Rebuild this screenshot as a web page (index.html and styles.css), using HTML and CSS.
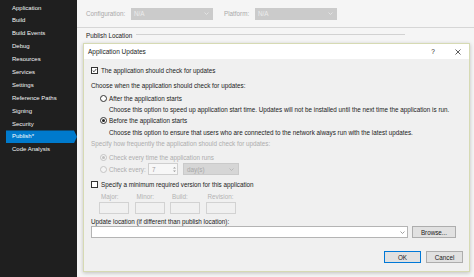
FILE: index.html
```html
<!DOCTYPE html>
<html>
<head>
<meta charset="utf-8">
<link rel="stylesheet" href="styles.css">
</head>
<body>
<div class="app">
  <nav class="sidebar">
    <div class="nav-item">Application</div>
    <div class="nav-item">Build</div>
    <div class="nav-item">Build Events</div>
    <div class="nav-item">Debug</div>
    <div class="nav-item">Resources</div>
    <div class="nav-item">Services</div>
    <div class="nav-item">Settings</div>
    <div class="nav-item">Reference Paths</div>
    <div class="nav-item">Signing</div>
    <div class="nav-item">Security</div>
    <div class="nav-item active">Publish*</div>
    <div class="nav-item">Code Analysis</div>
  </nav>
  <main class="main">
    <div class="toolbar">
      <span class="tb-label cfg">Configuration:</span>
      <div class="combo top"><span>N/A</span><svg class="chev" width="5" height="3" viewBox="0 0 5 3"><polyline points="0.5,0.5 2.5,2.5 4.5,0.5" fill="none" stroke="#e8e8e8" stroke-width="0.8"/></svg></div>
      <span class="tb-label plat">Platform:</span>
      <div class="combo top"><span>N/A</span><svg class="chev" width="5" height="3" viewBox="0 0 5 3"><polyline points="0.5,0.5 2.5,2.5 4.5,0.5" fill="none" stroke="#e8e8e8" stroke-width="0.8"/></svg></div>
    </div>
    <div class="section-head"><span>Publish Location</span><div class="rule"></div></div>
    <div class="dialog">
      <div class="titlebar">
        <span class="title">Application Updates</span>
        <span class="help">?</span>
        <span class="close"><svg width="6" height="6" viewBox="0 0 6 6"><path d="M0.5 0.5L5.5 5.5M5.5 0.5L0.5 5.5" stroke="#333" stroke-width="0.8"/></svg></span>
      </div>
      <div class="dlg-body">
        <div class="row r-check">
          <span class="cb checked"><svg width="5" height="5" viewBox="0 0 5 5"><polyline points="0.7,2.6 2,3.8 4.3,1" fill="none" stroke="#222" stroke-width="0.8"/></svg></span>
          <span class="lbl">The application should check for updates</span>
        </div>
        <div class="row r-choose">Choose when the application should check for updates:</div>
        <div class="row opt r-after"><span class="radio"></span><span class="lbl">After the application starts</span></div>
        <div class="row desc r-desc1">Choose this option to speed up application start time. Updates will not be installed until the next time the application is run.</div>
        <div class="row opt r-before"><span class="radio on"></span><span class="lbl">Before the application starts</span></div>
        <div class="row desc r-desc2">Choose this option to ensure that users who are connected to the network always run with the latest updates.</div>
        <div class="row dis r-freq">Specify how frequently the application should check for updates:</div>
        <div class="row opt dis r-every"><span class="radio on dis"></span><span class="lbl">Check every time the application runs</span></div>
        <div class="row opt dis r-interval">
          <span class="radio dis"></span><span class="lbl every-lbl">Check every:</span>
          <div class="spin"><span>7</span><svg width="3" height="7" viewBox="0 0 3 7"><path d="M0 2.5L1.5 1L3 2.5Z M0 4.5L1.5 6L3 4.5Z" fill="#9a9a9a"/></svg></div>
          <div class="combo days"><span>day(s)</span><svg width="5" height="3" viewBox="0 0 5 3"><polyline points="0.5,0.5 2.5,2.5 4.5,0.5" fill="none" stroke="#b0b0b0" stroke-width="0.8"/></svg></div>
        </div>
        <div class="row r-minver">
          <span class="cb"></span>
          <span class="lbl">Specify a minimum required version for this application</span>
        </div>
        <div class="versions">
          <div class="vcol"><span class="vlbl">Major:</span><div class="vbox"></div></div>
          <div class="vcol"><span class="vlbl">Minor:</span><div class="vbox"></div></div>
          <div class="vcol"><span class="vlbl">Build:</span><div class="vbox"></div></div>
          <div class="vcol"><span class="vlbl">Revision:</span><div class="vbox"></div></div>
        </div>
        <div class="r-uplbl">Update location (if different than publish location):</div>
        <div class="r-input">
          <div class="input"><svg width="5" height="3" viewBox="0 0 5 3"><polyline points="0.5,0.5 2.5,2.5 4.5,0.5" fill="none" stroke="#888" stroke-width="0.8"/></svg></div>
          <div class="btn browse">Browse...</div>
        </div>
        <div class="r-buttons">
          <div class="btn ok">OK</div>
          <div class="btn cancel">Cancel</div>
        </div>
      </div>
    </div>
  </main>
</div>
</body>
</html>
```
FILE: styles.css
```css
* { box-sizing: border-box; }
body {
  margin: 0;
  font-family: "Liberation Sans", Arial, sans-serif;
  font-size: 6.3px;
  color: #1a1a1a;
  background: #f5f5f5;
}
.app { display: flex; width: 474px; height: 277px; overflow: hidden; }
.sidebar { width: 77px; flex: none; background: #1f1f1f; padding-top: 1.5px; font-size: 6px; }
.nav-item {
  height: 12.9px; line-height: 12.9px; padding-left: 12px;
  color: #f4f4f4; white-space: nowrap;
}
.nav-item.active {
  margin-left: 6px; padding-left: 6px; background: #007acc; color: #fff;
  clip-path: polygon(0 0, calc(100% - 3px) 0, 100% 50%, calc(100% - 3px) 100%, 0 100%);
}
.main { flex: 1; display: flex; flex-direction: column; background: #f5f5f5; }
.toolbar {
  height: 28px; border-bottom: 1px solid #d6d6d6;
  display: flex; align-items: center; padding-left: 9px;
}
.tb-label { color: #a9a9a9; }
.tb-label.cfg { width: 45px; }
.tb-label.plat { width: 31px; margin-left: 11px; }
.combo {
  display: flex; align-items: center; justify-content: space-between;
  height: 12px; padding: 0 4px 0 3px;
}
.combo.top { width: 82px; background: #cbcbcb; color: #ececec; }
.section-head { height: 15px; display: flex; align-items: center; padding-left: 9px; }
.section-head .rule { margin-left: 4px; flex: none; width: 269px; height: 1px; background: #d2d2d2; margin-top: -2px; }
.dialog {
  margin-left: 6px; width: 387px; border: 1px solid #d6dab3;
  background: #f0f0f0; box-shadow: 0 1px 4px rgba(0,0,0,0.22);
}
.titlebar { height: 15px; background: #fff; display: flex; align-items: center; padding: 0 6px 0 4px; }
.title { flex: 1; font-size: 6.5px; }
.help { width: 10px; text-align: center; margin-right: 15px; font-size: 6.5px; }
.close { width: 10px; display: flex; justify-content: center; }
.dlg-body { padding: 6px 6px 8px 7px; }
.row { display: flex; align-items: center; height: 10px; white-space: nowrap; }
.cb { width: 7px; height: 7px; border: 1px solid #333; background: #fff; display: flex; align-items: center; justify-content: center; flex: none; }
.row .lbl { margin-left: 3px; }
.opt { padding-left: 9px; }
.opt .lbl { margin-left: 2px; }
.radio { width: 7px; height: 7px; border: 1px solid #333; border-radius: 50%; background: #fff; display: flex; align-items: center; justify-content: center; flex: none; }
.radio.on::after { content: ""; width: 3px; height: 3px; border-radius: 50%; background: #222; }
.radio.dis { border-color: #c4c4c4; background: #f4f4f4; }
.radio.on.dis::after { background: #c0c0c0; }
.dis { color: #adadad; }
.desc { padding-left: 18px; }
.r-choose { margin-top: 5px; }
.r-after { margin-top: 3px; }
.r-desc1 { margin-top: 1px; }
.r-before { margin-top: 1px; }
.r-desc2 { margin-top: 2px; }
.r-freq { margin-top: 1px; }
.r-every { margin-top: 4px; }
.r-interval { margin-top: 1px; height: 12px; }
.every-lbl { width: 39px; }
.spin {
  width: 30px; height: 12px; border: 1px solid #cfcfcf; background: #f7f7f7;
  display: flex; align-items: center; justify-content: space-between; padding: 0 1px 0 3px; color: #a0a0a0;
}
.combo.days { width: 56px; margin-left: 5px; background: #d6d6d6; border: 1px solid #cacaca; color: #a8a8a8; }
.r-minver { margin-top: 4px; }
.versions { display: flex; gap: 5.5px; margin-top: 3px; padding-left: 8px; }
.vcol { display: flex; flex-direction: column; width: 30px; }
.vlbl { height: 10px; line-height: 10px; padding-left: 2px; color: #b2b2b2; }
.vbox { height: 12px; border: 1px solid #d2d2d2; background: #f0f0f0; }
.r-uplbl { margin-top: 4px; height: 8px; line-height: 8px; }
.r-input { display: flex; height: 12px; }
.input {
  width: 317px; height: 12px; border: 1px solid #b4b4b4; background: #fff;
  display: flex; align-items: center; justify-content: flex-end; padding-right: 2px;
}
.btn {
  height: 12px; display: flex; align-items: center; justify-content: center;
  background: #e1e1e1; border: 1px solid #adadad;
}
.browse { width: 44px; margin-left: 4px; }
.r-buttons { display: flex; justify-content: flex-end; gap: 5px; margin-top: 13px; }
.ok { width: 37px; border-color: #0078d7; }
.cancel { width: 37px; }
```
